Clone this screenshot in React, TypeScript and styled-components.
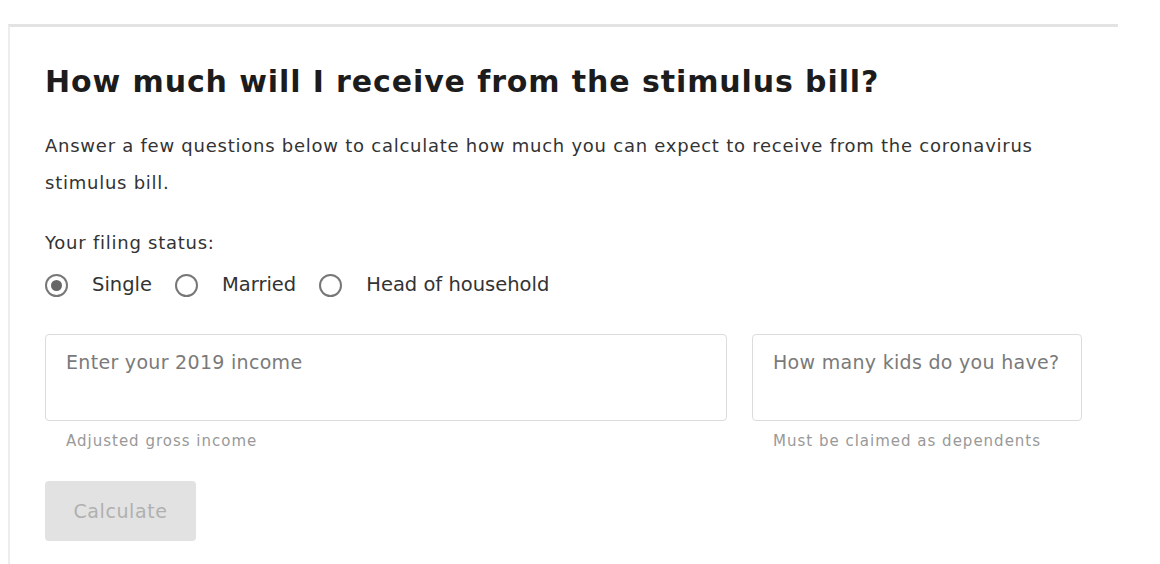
import { useState } from "react"
import styled, { createGlobalStyle } from "styled-components"

const GlobalStyle = createGlobalStyle`
  html, body {
    margin: 0;
    padding: 0;
    background: #fff;
  }
  body {
    font-family: "DejaVu Sans", "Liberation Sans", sans-serif;
    color: #262626;
  }
  * {
    box-sizing: border-box;
  }
`

const options = ["Single", "Married", "Head of household"]

export default function App() {
  const [status, setStatus] = useState("Single")

  return (
    <>
      <GlobalStyle />
      <Page>
        <Card>
          <Title>How much will I receive from the stimulus bill?</Title>
          <Intro>
            Answer a few questions below to calculate how much you can expect to receive from the coronavirus stimulus bill.
          </Intro>
          <Label>Your filing status:</Label>
          <RadioRow>
            {options.map((opt) => (
              <RadioOption key={opt} onClick={() => setStatus(opt)}>
                <RadioCircle $checked={status === opt} />
                <span>{opt}</span>
              </RadioOption>
            ))}
          </RadioRow>
          <Fields>
            <Field>
              <Input placeholder="Enter your 2019 income" />
              <Helper>Adjusted gross income</Helper>
            </Field>
            <Field>
              <Input placeholder="How many kids do you have?" />
              <Helper>Must be claimed as dependents</Helper>
            </Field>
          </Fields>
          <CalcButton disabled>Calculate</CalcButton>
        </Card>
      </Page>
    </>
  )
}

const Page = styled.div`
  padding: 24px 42px 0 8px;
  height: 564px;
  overflow: hidden;
`

const Card = styled.div`
  border-top: 3px solid #e3e3e3;
  border-left: 2px solid #ededed;
  padding: 37px 35px 40px 35px;
  min-height: 560px;
`

const Title = styled.h1`
  margin: 0;
  font-size: 30px;
  line-height: 36px;
  font-weight: 700;
  letter-spacing: 0.9px;
  color: #1c1c1c;
`

const Intro = styled.p`
  margin: 27px 0 0;
  font-size: 18px;
  line-height: 37px;
  letter-spacing: 0.75px;
  color: #333;
`

const Label = styled.div`
  margin-top: 30px;
  font-size: 18px;
  line-height: 24px;
  letter-spacing: 0.75px;
  color: #333;
`

const RadioRow = styled.div`
  display: flex;
  align-items: center;
  gap: 23px;
  margin-top: 18px;
`

const RadioOption = styled.label`
  display: flex;
  align-items: center;
  gap: 24px;
  font-size: 19.5px;
  line-height: 24px;
  color: #333;
  cursor: pointer;
`

const RadioCircle = styled.span<{ $checked: boolean }>`
  width: 23px;
  height: 23px;
  border-radius: 50%;
  border: 2px solid #777;
  display: flex;
  align-items: center;
  justify-content: center;

  &::after {
    content: "";
    width: 11px;
    height: 11px;
    border-radius: 50%;
    background: ${(p) => (p.$checked ? "#666" : "transparent")};
  }
`

const Fields = styled.div`
  display: grid;
  grid-template-columns: 682px 330px;
  gap: 25px;
  margin-top: 37px;
`

const Field = styled.div`
  display: flex;
  flex-direction: column;
`

const Input = styled.input`
  height: 87px;
  border: 1.5px solid #dcdcdc;
  border-radius: 4px;
  padding: 0 4px 32px 20px;
  font-family: inherit;
  font-size: 19px;
  letter-spacing: 0.3px;
  color: #333;
  outline: none;

  &::placeholder {
    color: #7a7a7a;
  }
`

const Helper = styled.div`
  margin-top: 11px;
  padding-left: 21px;
  font-size: 15px;
  line-height: 18px;
  letter-spacing: 1px;
  color: #999;
`

const CalcButton = styled.button`
  margin-top: 31px;
  width: 151px;
  height: 60px;
  border: none;
  border-radius: 4px;
  background: #e2e2e2;
  color: #b0b0b0;
  font-family: inherit;
  font-size: 19px;
  letter-spacing: 0.6px;
  font-weight: 400;
`
